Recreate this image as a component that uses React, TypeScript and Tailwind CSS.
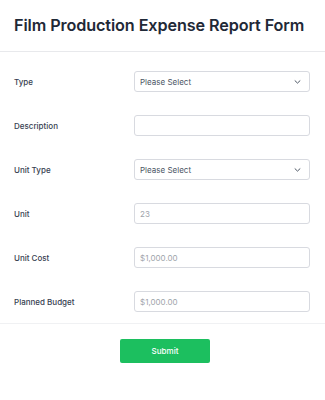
import React from "react";

const Chevron = () => (
  <svg width="7" height="5" viewBox="0 0 7 5" className="absolute right-[8px] top-1/2 -translate-y-1/2" fill="none">
    <path d="M1 1.2 L3.5 3.6 L6 1.2" stroke="#4b5563" strokeWidth="1" strokeLinecap="round" strokeLinejoin="round" />
  </svg>
);

const Field = ({ label, kind, value }: { label: string; kind: "select" | "input"; value?: string }) => (
  <div className="flex items-center h-[21px]">
    <div className="w-[120px] text-[8px] font-medium text-[#374151]">{label}</div>
    <div className="relative flex-1 h-[21px] rounded-[3px] border border-[#d8dae0] bg-white flex items-center px-[5px]">
      {kind === "select" ? (
        <>
          <span className="text-[8px] text-[#4b5563]">Please Select</span>
          <Chevron />
        </>
      ) : (
        <span className="text-[8px] text-[#a0a4ab]">{value}</span>
      )}
    </div>
  </div>
);

export default function App() {
  return (
    <div className="w-[325px] h-[400px] bg-white" style={{ fontFamily: "Inter, 'Noto Sans', sans-serif" }}>
      <div className="h-[52px] flex items-center px-[14px] border-b border-[#e8e9ec]">
        <h1 className="text-[16.2px] font-semibold text-[#1f2937] tracking-[-0.1px] whitespace-nowrap">
          Film Production Expense Report Form
        </h1>
      </div>
      <div className="pl-[14px] pr-[15px] pt-[19px] pb-[11px] flex flex-col gap-[23px] border-b border-[#f0f1f3]">
        <Field label="Type" kind="select" />
        <Field label="Description" kind="input" value="" />
        <Field label="Unit Type" kind="select" />
        <Field label="Unit" kind="input" value="23" />
        <Field label="Unit Cost" kind="input" value="$1,000.00" />
        <Field label="Planned Budget" kind="input" value="$1,000.00" />
      </div>
      <div className="flex justify-center pt-[15px] pl-[5px]">
        <button className="w-[90px] h-[24px] rounded-[2px] bg-[#1cbf5f] text-white text-[8px] font-medium">
          Submit
        </button>
      </div>
    </div>
  );
}
